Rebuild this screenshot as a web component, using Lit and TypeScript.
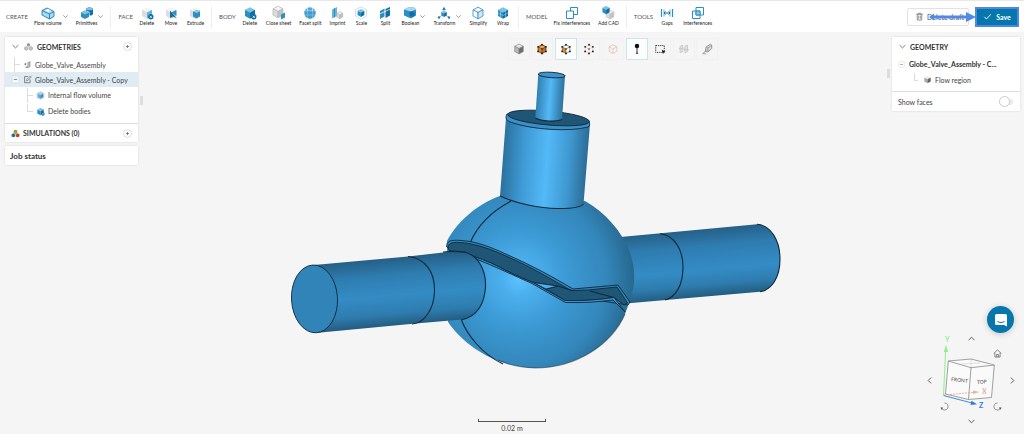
import { LitElement, html, svg, css, nothing, type SVGTemplateResult } from "lit";
import { customElement, state } from "lit/decorators.js";
import { classMap } from "lit/directives/class-map.js";

type Glyph = SVGTemplateResult;

const BLUE = ["#7cc4e6", "#2c8fc4", "#0f6fa5"];
const GREY = ["#f4f4f4", "#dcdcdc", "#c2c2c2"];
const DARK = ["#e8e8e8", "#b9b9b9", "#6e6e6e"];

const cube = (c: string[], stroke = "none", t = ""): Glyph => svg`
  <g transform=${t} stroke=${stroke} stroke-width="0.8" stroke-linejoin="round">
    <path fill=${c[0]} d="M7 1.200 12 3.800 7 6.500 2 3.800Z"/>
    <path fill=${c[1]} d="M2 3.800 7 6.500V12.800L2 10Z"/>
    <path fill=${c[2]} d="M12 3.800 7 6.500V12.800L12 10Z"/>
  </g>`;

const badge = svg`<circle cx="10.800" cy="10.800" r="2.700" fill="#0f6fa5"/><path d="M9.800 9.800l2 2m0-2l-2 2" stroke="#fff" stroke-width="0.800"/>`;
const cubeDots = (stroke: string): Glyph => svg`
  <path d="M7 2 11.500 4.500V9.800L7 12.300 2.500 9.800V4.500ZM2.500 4.500 7 7l4.500-2.500M7 7v5.300" fill="none" stroke=${stroke} stroke-width="0.800"/>`;
const dots = svg`<g fill="#222"><circle cx="7" cy="2" r="1.100"/><circle cx="11.500" cy="4.500" r="1.100"/><circle cx="11.500" cy="9.800" r="1.100"/><circle cx="7" cy="12.300" r="1.100"/><circle cx="2.500" cy="9.800" r="1.100"/><circle cx="2.500" cy="4.500" r="1.100"/><circle cx="7" cy="7" r="0.900"/></g>`;

const glyphs: Record<string, Glyph> = {
  flow: svg`<path d="M1 4.500 6 2l7 3.500v5L8.500 13 1 9Z" fill="#a9d8ef" stroke="#1b80b5" stroke-width="0.900"/><path d="M1 4.500 8.500 8 13 5.500M8.500 8v5" fill="none" stroke="#1b80b5" stroke-width="0.900"/><path d="M4 4.300 7 3l3 1.600-3 1.400Z" fill="#fff"/>`,
  primitives: svg`<path d="M1 6.500 5 4.500l4 2v4.500l-4 2-4-2Z" fill="#2c8fc4"/><path d="M1 6.500 5 8.500l4-2-4-2Z" fill="#7cc4e6"/><path d="M6 3c0-2 7-2 7 0v5c0 1-2 1.800-3.500 1.500V6L6 4.500Z" fill="#0f6fa5"/><ellipse cx="9.500" cy="3" rx="3.500" ry="1.300" fill="#7cc4e6"/>`,
  faceDelete: svg`${cube(GREY)}<path d="M12 4 7 6.500V12.500L12 10Z" fill="#67b4dc"/>${badge}`,
  move: svg`${cube(GREY)}<path d="M6 4.500 13 12.500 9 10.500 6 12Z" fill="#0f6fa5"/><path d="M12.500 4v6L7.500 6.500Z" fill="#2c8fc4"/>`,
  extrude: svg`${cube(GREY)}<path d="M5 5.500 8.500 4 12 5.500v5l-3.500 2L5 10.500Z" fill="#2c8fc4"/><path d="M5 5.500 8.500 7 12 5.500 8.500 4Z" fill="#8dcbe9"/>`,
  bodyDelete: svg`${cube(BLUE)}${badge}`,
  closeSheet: svg`${cube(GREY, "#bbb", "translate(-1 -1)")}<path d="M13 6.500v5L9 13.500v-5Z" fill="#2c8fc4"/>`,
  facetSplit: svg`<circle cx="7" cy="7" r="5.800" fill="#55a9d6"/><path d="M1.500 5h11M1.500 9h11M4.500 1.800v10.400M9.500 1.800v10.400" stroke="#cbe7f5" stroke-width="0.800"/><path d="M1.500 5h11l-1 6L7 13 2.500 11Z" fill="#2c8fc4" opacity="0.500"/>`,
  imprint: svg`<path d="M2 3.500 7 1v9l-5 2.500Z" fill="#67b4dc"/><path d="M4.500 2.300v9" stroke="#1b80b5" stroke-width="0.800"/>${cube(GREY, "#aaa", "translate(5.500 5) scale(0.600)")}`,
  scale: svg`<path d="M7 .8 12.500 3.800v6.400L7 13.200 1.500 10.200V3.800Z" fill="none" stroke="#b8d9e8" stroke-width="0.800"/>${cube(BLUE, "none", "translate(2.200 2.200) scale(0.680)")}`,
  split: svg`<path d="M2 5 6.500 2.500v8L2 13Z" fill="#2c8fc4"/><path d="M7.500 3 12 1v8.500L7.500 12Z" fill="#0f6fa5"/><path d="M1.500 8 12.500 3" stroke="#fff" stroke-width="0.700"/>`,
  boolean: svg`<path d="M1 3.500 5 1.500h6l2 2v6l-5 3-7-3Z" fill="#2c8fc4"/><path d="M1 3.500 5 1.500h6l2 2-5 2Z" fill="#a9d8ef"/><circle cx="9" cy="8" r="2.800" fill="#0f6fa5"/>`,
  transform: svg`<path d="M7 2v6L2 11.500M7 8l5 3.500" stroke="#8ab" stroke-width="0.800" fill="none"/><path d="M7 .8 8.800 4H5.200Z" fill="#1b80b5"/>${cube(BLUE, "none", "translate(3.200 4) scale(0.550)")}<circle cx="2" cy="11.500" r="1.200" fill="#1b80b5"/><circle cx="12" cy="11.500" r="1.200" fill="#1b80b5"/>`,
  simplify: svg`${cube(["#fff", "#fff", "#cfe8f5"], "#2c8fc4")}`,
  wrap: svg`${cube(BLUE)}<path d="M4.500 5.200v6M9.500 5.200v6M2 7l5 2.500L12 7" stroke="#b9dff1" stroke-width="0.500" fill="none"/>`,
  fix: svg`<path d="M5.500 5V1.500h7v7H9" fill="none" stroke="#2c8fc4"/><path d="M1.500 5h7v7.500h-7Z" fill="#fff" stroke="#2c8fc4"/>`,
  addCad: svg`${cube(GREY, "#c4c4c4", "translate(3.500 3) scale(0.780)")}${cube(BLUE, "none", "translate(0 -1) scale(0.720)")}`,
  gaps: svg`<path d="M1.500 3v8M12.500 3v8" stroke="#2c8fc4" stroke-width="1.200"/><path d="M3 3.500h2v7H3ZM9 3.500h2v7H9Z" fill="#a9d8ef"/><path d="M4 7h6M5.500 5.500 4 7l1.500 1.500M8.500 5.500 10 7 8.500 8.500" stroke="#0f6fa5" fill="none"/>`,
  interferences: svg`<path d="M5 1.500h7.500V9H5Z M1.500 5H9v7.500H1.500Z" fill="none" stroke="#2c8fc4"/><path d="M5 5h4v4H5Z" fill="#8dcbe9" stroke="#2c8fc4"/>`,
  shaded: svg`${cube(DARK, "#8a8a8a")}`,
  volume: svg`${cube(["#f3a24d", "#e48420", "#c96d10"])}${cubeDots("#444")}${dots}`,
  face: svg`<path d="M2.500 4.500 7 7v5.300L2.500 9.800Z" fill="#e48420"/>${cubeDots("#666")}${dots}`,
  vertex: svg`${cubeDots("#f0c9b5")}${dots}`,
  edge: svg`${cubeDots("#e8b9a2")}`,
  pin: svg`<circle cx="7" cy="3.500" r="2.600" fill="#111"/><path d="M7 5.500V12" stroke="#111"/><ellipse cx="7" cy="12" rx="1.600" ry="0.800" fill="#555"/>`,
  box: svg`<path d="M2 3h10v8H2Z" fill="none" stroke="#333" stroke-width="1.100" stroke-dasharray="1.500 1"/><path d="M9 8l4.500 2.200-2.200.7-.7 2.100Z" fill="#111"/>`,
  region: svg`<path d="M2.500 4 5.500 2.500v7.500L2.500 11.500ZM8 4 11 2.500V10L8 11.500Z" fill="#e4e4e4" stroke="#bbb" stroke-width="0.800"/><path d="M1 6.500l12 1.500" stroke="#bbb" stroke-width="0.800"/>`,
  measure: svg`<path d="M2 12.500 6.500 8.500M6 4.500l5-3 1.500 1v4l-4.500 4-3-.5Z" fill="#ddd" stroke="#8a8a8a"/><path d="M6 4.500l2 1.500v4M8 6l4.500-3.500M2 12.500l4 .2" fill="none" stroke="#8a8a8a" stroke-width="0.900"/>`,
  tree: svg`<path d="M7 1.500 9.500 3v3L7 7.500 4.500 6V3Z" fill="#999"/><path d="M3.500 7 6 8.500v3L3.500 13 1 11.500v-3ZM10.500 7 13 8.500v3L10.500 13 8 11.500v-3Z" fill="#c9c9c9" stroke="#888" stroke-width="0.800"/>`,
  part: svg`<path d="M7 3.500 11.500 2v8.500L8 12.500H4V10h3Z" fill="#999"/><path d="M2.500 5.500 5 4.500v3l-2.500 1Z" fill="#777"/><path d="M9 3.500v8" stroke="#eee" stroke-width="0.800"/>`,
  edit: svg`<path d="M8 2.500H2.500v9.500H11V7" fill="none" stroke="#666" stroke-width="1.200"/><path d="M5.500 9 6 7l5.500-5.500L13 3 7.500 8.500Z" fill="none" stroke="#666"/>`,
  internal: svg`<path d="M7 .3 13 3.500v7L7 13.700 1 10.500V3.500Z" fill="#c3ced5"/>${cube(["#9fd3ee", "#5aaedb", "#2c8fc4"], "none", "translate(1.400 1.400) scale(0.800)")}`,
  sim: svg`<path d="M7 1 9.800 2.500v3.200L7 7.200 4.200 5.700V2.500Z" fill="#7ba33c"/><path d="M3.700 6.500 6.500 8v3.500L3.700 13 .9 11.500V8Z" fill="#1c6e9e"/><path d="M10.300 6.500 13.100 8v3.500L10.300 13 7.500 11.500V8Z" fill="#b5442c"/><path d="M4.500 5.500h5v3h-5Z" fill="#e0a12b"/>`,
  body: svg`${cube(["#eee", "#aaa", "#666"])}`,
  trash: svg`<path d="M2 3.500h10M5 3.500V2h4v1.500M3.500 3.500V12.500h7V3.500M5.700 5.500v5M8.300 5.500v5" fill="none" stroke="#666" stroke-width="1.100"/>`,
  check: svg`<path d="M2 7.500 5.500 11 12 3.500" fill="none" stroke="#fff" stroke-width="1.400"/>`,
  down: svg`<path d="M2.500 4.800 7 9.200l4.500-4.400" fill="none" stroke="#777" stroke-width="1.500"/>`,
  up: svg`<path d="M2.500 9.500 7 5l4.500 4.500" fill="none" stroke="#555" stroke-width="1.500"/>`,
  left: svg`<path d="M9.500 2.500 5 7l4.500 4.500" fill="none" stroke="#555" stroke-width="1.500"/>`,
  right: svg`<path d="M4.500 2.500 9 7l-4.500 4.500" fill="none" stroke="#555" stroke-width="1.500"/>`,
  plus: svg`<circle cx="7" cy="7" r="6.200" fill="#fff" stroke="#ccc"/><path d="M7 4.500v5M4.500 7h5" stroke="#666" stroke-width="1.200"/>`,
  minus: svg`<rect x="1.500" y="1.500" width="11" height="11" rx="2" fill="#fff" fill-opacity="0.700" stroke="#d5d5d5"/><path d="M4.500 7h5" stroke="#777" stroke-width="1.300"/>`,
  home: svg`<path d="M1 7 7 1.500 13 7M3 6v6.500h8V6M5.700 12.500V8.500h2.600v4" fill="none" stroke="#666" stroke-width="1.200"/>`,
  ccw: svg`<path d="M2.500 10A5.500 5.500 0 1 0 7 1.500" fill="none" stroke="#777" stroke-width="1.200"/><path d="M.5 8.500h4.500L2.500 12Z" fill="#555"/>`,
  cw: svg`<path d="M11.500 10A5.500 5.500 0 1 1 7 1.500" fill="none" stroke="#777" stroke-width="1.200"/><path d="M13.500 8.500H9l2.500 3.500Z" fill="#555"/>`,
};

const icon = (name: string, size = "") =>
  html`<svg class="icon ${size}" viewBox="0 0 14 14" aria-hidden="true">${glyphs[name]}</svg>`;

interface Tool { icon: string; label: string; menu?: boolean }

const groups: { name: string; tools: Tool[] }[] = [
  { name: "CREATE", tools: [{ icon: "flow", label: "Flow volume", menu: true }, { icon: "primitives", label: "Primitives", menu: true }] },
  { name: "FACE", tools: [{ icon: "faceDelete", label: "Delete" }, { icon: "move", label: "Move" }, { icon: "extrude", label: "Extrude" }] },
  {
    name: "BODY",
    tools: [
      { icon: "bodyDelete", label: "Delete" }, { icon: "closeSheet", label: "Close sheet" },
      { icon: "facetSplit", label: "Facet split" }, { icon: "imprint", label: "Imprint" },
      { icon: "scale", label: "Scale" }, { icon: "split", label: "Split" },
      { icon: "boolean", label: "Boolean", menu: true }, { icon: "transform", label: "Transform", menu: true },
      { icon: "simplify", label: "Simplify" }, { icon: "wrap", label: "Wrap" },
    ],
  },
  { name: "MODEL", tools: [{ icon: "fix", label: "Fix interferences" }, { icon: "addCad", label: "Add CAD" }] },
  { name: "TOOLS", tools: [{ icon: "gaps", label: "Gaps" }, { icon: "interferences", label: "Interferences" }] },
];

const viewTools: { icon: string; label: string; on?: boolean }[] = [
  { icon: "shaded", label: "Render mode" }, { icon: "volume", label: "Pick volumes" },
  { icon: "face", label: "Pick faces", on: true }, { icon: "vertex", label: "Pick vertices" },
  { icon: "edge", label: "Pick edges" }, { icon: "pin", label: "Probe", on: true },
  { icon: "box", label: "Box select" }, { icon: "region", label: "Clip" }, { icon: "measure", label: "Measure" },
];

const shared = css`
  * { box-sizing: border-box; }
  button { font: inherit; color: inherit; background: none; border: 0; padding: 0; margin: 0; cursor: pointer; }
  svg { display: block; }
  .icon { width: 12px; height: 12px; flex: none; }
  .icon.tiny { width: 7px; height: 7px; }
  .icon.small { width: 9px; height: 9px; }
  .icon.large { width: 14px; height: 14px; }
`;

@customElement("tool-bar")
export class ToolBar extends LitElement {
  static styles = [shared, css`
    :host { display: flex; align-items: center; justify-content: space-between; height: 32px; background: #fff; border-top: 1px solid #e8e8e8; }
    .groups { display: flex; }
    .group { display: flex; align-items: center; height: 22px; padding: 0 3px 0 7px; border-left: 1px solid #eee; }
    .group:first-child { border-left: 0; padding-left: 6px; }
    .name { font-size: 6px; color: #555; margin-right: 2px; }
    .tool { display: flex; flex-direction: column; align-items: center; min-width: 24px; padding: 0 4px; font-size: 5px; line-height: 7px; white-space: nowrap; color: #222; }
    .menu { margin: 0 3px 0 -4px; }
    .actions { position: relative; display: flex; align-items: center; gap: 6px; margin-right: 5px; }
    .discard { display: flex; align-items: center; gap: 3px; height: 18px; padding: 0 4px 0 7px; font-size: 7px; border: 1px solid #e2e2e2; border-radius: 2px; color: #555; }
    .save { display: flex; align-items: center; justify-content: center; gap: 4px; width: 44px; height: 20px; font-size: 7px; font-weight: 700; color: #fff; background: #0577ac; border: 2px solid #4f87e6; }
    .arrow { position: absolute; right: 43px; top: 5px; width: 47px; height: 10px; }
  `];

  render() {
    return html`
      <div class="groups">
        ${groups.map((g) => html`
          <div class="group" role="group" aria-label=${g.name}>
            <span class="name">${g.name}</span>
            ${g.tools.map((t) => html`
              <button class="tool">${icon(t.icon, "large")}<span>${t.label}</span></button>
              ${t.menu ? html`<button class="menu" aria-label="${t.label} options">${icon("down", "tiny")}</button>` : nothing}
            `)}
          </div>`)}
      </div>
      <div class="actions">
        <button class="discard">${icon("trash", "small")}Delete draft</button>
        <button class="save">${icon("check", "small")}Save</button>
        <svg class="arrow" viewBox="0 0 47 10" aria-hidden="true">
          <path d="M0 5 5 1.500V3.500H37V0L47 5 37 10V6.500H5V8.500Z" fill="#5089e8"/>
        </svg>
      </div>`;
  }
}

@customElement("geometry-tree")
export class GeometryTree extends LitElement {
  static styles = [shared, css`
    :host { display: flex; flex-direction: column; gap: 4px; width: 133px; font-size: 7px; color: #444; }
    .card { background: #fff; box-shadow: 0 0 2px #0002; }
    .head { display: flex; align-items: center; gap: 4px; height: 19px; padding: 0 6px; font-weight: 700; color: #333; }
    .head .title { flex: 1; }
    .row { display: flex; align-items: center; gap: 3px; height: 15px; padding-left: 6px; }
    .row.on { background: #dfecf4; }
    .stub { width: 9px; height: 15px; display: flex; align-items: center; justify-content: flex-end; }
    .stub::before { content: ""; width: 5px; height: 15px; border-left: 1px solid #ddd; background: linear-gradient(#ddd, #ddd) center / 100% 1px no-repeat; }
    .child { padding-left: 19px; height: 16px; }
    .child.last .stub::before { height: 8px; margin-bottom: 7px; background-position: bottom; }
    .tree { padding: 1px 0 4px; }
    .sims { gap: 3px; border-top: 1px solid #ddd; }
    .job { height: 19px; padding: 0 5px; display: flex; align-items: center; font-size: 8px; font-weight: 700; color: #333; }
  `];

  render() {
    return html`
      <section class="card">
        <div class="head">
          <button aria-label="Collapse geometries">${icon("down", "small")}</button>
          ${icon("tree", "small")}<span class="title">GEOMETRIES</span>
          <button aria-label="Add geometry">${icon("plus", "small")}</button>
        </div>
        <div class="tree">
          <div class="row"><span class="stub"></span>${icon("part", "small")}<span>Globe_Valve_Assembly</span></div>
          <div class="row on"><button aria-label="Collapse copy">${icon("minus", "small")}</button>${icon("edit", "small")}<span>Globe_Valve_Assembly - Copy</span></div>
          <div class="row child"><span class="stub"></span>${icon("internal", "small")}<span>Internal flow volume</span></div>
          <div class="row child last"><span class="stub"></span>${icon("bodyDelete", "small")}<span>Delete bodies</span></div>
        </div>
        <div class="head sims">
          ${icon("sim", "small")}<span class="title">SIMULATIONS (0)</span>
          <button aria-label="Add simulation">${icon("plus", "small")}</button>
        </div>
      </section>
      <section class="card job">Job status</section>`;
  }
}

@customElement("geometry-details")
export class GeometryDetails extends LitElement {
  @state() private faces = false;

  static styles = [shared, css`
    :host { display: block; width: 128px; font-size: 7px; color: #444; background: #fff; box-shadow: 0 0 2px #0002; }
    .head, .row { display: flex; align-items: center; padding: 0 6px; }
    .head { gap: 3px; height: 19px; font-weight: 700; color: #333; }
    .row { gap: 4px; height: 16px; }
    .name { font-weight: 700; overflow: hidden; text-overflow: ellipsis; white-space: nowrap; color: #333; }
    .child { padding-left: 22px; margin-bottom: 4px; gap: 3px; height: 15px; }
    .elbow { width: 4px; height: 8px; margin: 0 2px 6px 0; border-left: 1px solid #ddd; border-bottom: 1px solid #ddd; }
    .toggle { display: flex; align-items: center; justify-content: space-between; height: 20px; padding: 0 7px 0 6px; border-top: 1px solid #ddd; }
    .switch { appearance: none; margin: 0; width: 14px; height: 6px; border-radius: 3px; background: #eaeaea; display: flex; align-items: center; }
    .switch::before { content: ""; width: 9px; height: 9px; flex: none; border-radius: 50%; background: #fff; border: 1px solid #ccc; }
    .switch:checked { justify-content: flex-end; background: #0577ac; }
  `];

  render() {
    return html`
      <div class="head"><button aria-label="Collapse geometry">${icon("down", "small")}</button><span>GEOMETRY</span></div>
      <div class="row"><button aria-label="Collapse assembly">${icon("minus", "tiny")}</button><span class="name">Globe_Valve_Assembly - C...</span></div>
      <div class="row child"><span class="elbow"></span>${icon("body", "small")}<span>Flow region</span></div>
      <label class="toggle">Show faces
        <input class="switch" type="checkbox" .checked=${this.faces}
          @change=${(e: Event) => (this.faces = (e.target as HTMLInputElement).checked)} />
      </label>`;
  }
}

@customElement("valve-model")
export class ValveModel extends LitElement {
  static styles = [shared, css`
    :host { display: block; }
    .scene { width: 100%; height: 100%; }
    .line { fill: none; stroke: #10293a; stroke-width: 1.1; stroke-linejoin: round; }
    .edge { stroke: #10293a; stroke-width: 0.9; stroke-linejoin: round; }
    .dark { fill: #1f5676; }
  `];

  render() {
    return html`
      <svg class="scene" viewBox="0 32 1024 402" role="img" aria-label="Globe valve model">
        <defs>
          <radialGradient id="ball" gradientUnits="userSpaceOnUse" cx="519" cy="279" r="118">
            <stop offset="0" stop-color="#5cc2ff"/><stop offset=".14" stop-color="#4cb0ee"/>
            <stop offset=".4" stop-color="#3c9ad5"/><stop offset=".75" stop-color="#3386ba"/><stop offset="1" stop-color="#266489"/>
          </radialGradient>
          <linearGradient id="pipe" gradientUnits="userSpaceOnUse" x1="400" y1="257" x2="406" y2="325">
            <stop offset="0" stop-color="#255f86"/><stop offset=".25" stop-color="#2e7cb0"/><stop offset=".55" stop-color="#348cc5"/>
            <stop offset=".82" stop-color="#2e7cae"/><stop offset="1" stop-color="#235b7e"/>
          </linearGradient>
          <linearGradient id="pipe2" gradientUnits="userSpaceOnUse" x1="700" y1="229" x2="706" y2="297">
            <stop offset="0" stop-color="#255f86"/><stop offset=".25" stop-color="#2e7cb0"/><stop offset=".6" stop-color="#348cc5"/>
            <stop offset=".82" stop-color="#2e7cae"/><stop offset="1" stop-color="#235b7e"/>
          </linearGradient>
          <linearGradient id="neck" gradientUnits="userSpaceOnUse" x1="503" y1="160" x2="587" y2="166">
            <stop offset="0" stop-color="#2c729f"/><stop offset=".25" stop-color="#3f9bd6"/><stop offset=".52" stop-color="#53b9f7"/>
            <stop offset=".78" stop-color="#3f98d0"/><stop offset="1" stop-color="#2b6c95"/>
          </linearGradient>
          <linearGradient id="stem" gradientUnits="userSpaceOnUse" x1="536" y1="96" x2="564" y2="98">
            <stop offset="0" stop-color="#2f7dae"/><stop offset=".5" stop-color="#53b9f7"/><stop offset="1" stop-color="#2c6f99"/>
          </linearGradient>
        </defs>
        <path fill="url(#pipe2)" d="M615 237.500 757 224.300C771 225 780 241 780 259 780 277 772 290 760 291.700L620 304Z"/>
        <path class="line" d="M757 224.300C771 225 780 241 780 259 780 277 772 290 760 291.700M660 233.700C674 235 683 249 683 267 683 285 676 297 665 300"/>
        <path fill="url(#ball)" d="M447 241C457 222 477 204 500 196L585 201C606 213 621 231 629 250 636 268 636 285 629 303L625 314C612 344 577 368 535 368 498 367 466 348 448 322L447 290Z"/>
        <path class="line" d="M625 314C612 344 577 368 535 368 521 367.500 509 365 498 360" stroke-opacity="0.500"/>
        <path class="line" d="M511 201C494 210 478 224 470 243M461 319C467 335 482 354 503 364"/>
        <path fill="url(#neck)" d="M506 118 500 196C515 203 540 209 560 208.500 570 208.500 581 207 583.500 204L590 124Z"/>
        <path class="line" d="M500 196C515 203 540 209 560 208.500 570 208.500 581 207 583.500 204"/>
        <path class="edge" fill="#3a8fc6" d="M507 114C505 118 506 120 510 122 532 130 570 132 588 127 590 126 590 124 589 121Z"/>
        <ellipse class="dark edge" cx="548.500" cy="118" rx="41" ry="7" transform="rotate(5 548.500 118)"/>
        <path fill="url(#stem)" d="M538.300 74 535.300 118C541 121.500 556 122 562 119.500L565 76Z"/>
        <path class="line" d="M535.300 118C541 121.500 556 122 562 119.500"/>
        <ellipse fill="#3d94cb" class="edge" cx="551.700" cy="75" rx="13.500" ry="2.700" transform="rotate(4 551.700 75)"/>
        <path class="edge" fill="#2f83b8" d="M446.800 247C446 240 452 239 470 241.500 484 244 497 250 508 255 533 266 553 277 573 289L618 285 630 302 628 305 570 296Z"/>
        <path class="dark edge" d="M448 247C448 242 456 241.500 469 243.500 483 246 496 251.500 507 256.500 531 267 551 279 571 290.500L588 290 617 287 627.500 303 624 305 614 297.500C598 300 582 301 565 300.500L546 289 558 286 533 282.500C524 279 515 275 507 271 496 265 485 260 475 257L465 252 449 250.500Z"/>
        <path fill="#4eb0ec" class="edge" d="M533 282.500 558 286 546 289Z"/>
        <path class="line" d="M558 286 572 290.500M590 291 614 297.500"/>
        <path class="edge" fill="#3a96d0" d="M475 257C485 260 496 265 507 271 515 275 524 279 533 282.500L565 300.500C582 301 598 300 614 297.500L625 312 613 300C598 302 583 303 565.500 302.500L532 283.500C515 276 494 266 475 258.500Z"/>
        <path fill="url(#pipe)" d="M314 265 408 256.500 443 252.500C449 251 458 251.500 466 252.500 478 256 486 270 485.500 286 485 303 477 317 462 319.500L413 323.700 318 332.700Z"/>
        <path class="line" d="M443 252C449 251 458 251.500 466 252.500 478 256 486 270 485.500 286 485 303 477 317 462 319.500M408 256.500C425 258 435 272 434.500 291 434 310 424 323 412 324"/>
        <ellipse class="edge" fill="#3084b8" cx="314.500" cy="298.900" rx="23" ry="33.900" transform="rotate(-3 314.500 298.900)"/>
      </svg>`;
  }
}

@customElement("view-cube")
export class ViewCube extends LitElement {
  static styles = [shared, css`
    :host { display: grid; grid-template: 24px 1fr 24px / 24px 1fr 24px; width: 92px; height: 92px; }
    .cube { grid-area: 1 / 1 / 4 / 4; width: 92px; height: 92px; }
    .up { grid-area: 1 / 2; place-self: start center; }
    .home { grid-area: 1 / 3; place-self: end start; }
    .left { grid-area: 2 / 1; place-self: center start; }
    .right { grid-area: 2 / 3; place-self: center end; }
    .ccw { grid-area: 3 / 1; place-self: start end; }
    .down { grid-area: 3 / 2; place-self: end center; }
    .cw { grid-area: 3 / 3; place-self: start start; }
    .down .icon { transform: rotate(180deg); }
    .wire { fill: #fafafa; stroke: #888; stroke-width: 0.8; stroke-linejoin: round; }
    .caption { font-size: 5px; fill: #444; }
    .axis { font-size: 7px; font-weight: 700; }
  `];

  render() {
    return html`
      <svg class="cube" viewBox="925 334 92 92" aria-label="View cube">
        <path d="M943.500 395 945.700 350" stroke="#8df08d"/><path d="M943.800 352 946 345 948 352Z" fill="#8df08d"/>
        <path class="wire" d="M948.300 361 971 359 994.300 365 991.500 397.500 968.500 399.500 945.500 394Z"/>
        <path class="wire" d="M948.300 361 971 367.700 994.300 365M971 367.700 968.500 399.500"/>
        <path d="M962 364l18-1M971 360v7" stroke="#ccc" stroke-width="0.600"/>
        <path d="M944 395 974 392.300" stroke="#e0a08c" stroke-width="0.800" stroke-dasharray="2 1"/><path d="M973 390.500 979.500 392 973 394Z" fill="#e5b3a3"/>
        <path d="M943.500 395.500 972 403" stroke="#4a90e2" stroke-width="1.100"/><path d="M971.500 400.800 977 404.300 970.500 405Z" fill="#2d7be0"/>
        <text class="axis" x="945" y="342" fill="#8df08d">Y</text>
        <text class="axis" x="982" y="394" fill="#e0b09f">X</text>
        <text class="axis" x="979" y="408" fill="#2d7be0">Z</text>
        <text class="caption" transform="translate(951 381) rotate(6)">FRONT</text>
        <text class="caption" transform="translate(977 384) rotate(-4)">TOP</text>
      </svg>
      ${["up", "home", "left", "right", "ccw", "down", "cw"].map((n) => html`
        <button class=${n} aria-label="View ${n}">${icon(n === "down" ? "up" : n, "small")}</button>`)}`;
  }
}

@customElement("app-root")
export class AppRoot extends LitElement {
  static styles = [shared, css`
    :host { display: flex; flex-direction: column; min-height: 100vh; background: #f5f5f5; font-family: Lato, sans-serif; font-size: 7px; color: #444; }
    .stage { position: relative; flex: 1; display: flex; flex-direction: column; justify-content: space-between; }
    .model { position: absolute; inset: 0; }
    .top { position: relative; display: flex; align-items: flex-start; gap: 2px; padding: 5px 4px 0 5px; }
    .grip { width: 3px; height: 9px; background: #ddd; margin-top: 59px; }
    .grip.right { margin-top: 32px; }
    .center { flex: 1; display: flex; justify-content: center; padding-left: 196px; }
    .view { display: grid; grid-template-columns: repeat(9, 1fr); width: 212px; margin-top: 1px; }
    .pick { display: grid; place-items: center; width: 22px; height: 22px; justify-self: center; border: 1px solid #f1f1f1; }
    .pick.on { background: #fcfdfd; border-color: #cfe3ec; }
    .scale { position: relative; align-self: center; width: 68px; text-align: center; font-size: 7px; line-height: 9px; padding-bottom: 1px; }
    .bar { height: 3px; margin-bottom: 2px; border: solid #555; border-width: 0 1px 1px; }
    .cube { position: absolute; right: 7px; bottom: 8px; }
    .chat { position: absolute; right: 10px; bottom: 101px; display: grid; place-items: center; width: 27px; height: 27px; border-radius: 50%; background: #0577ac; box-shadow: 0 1px 6px #0003; }
  `];

  render() {
    return html`
      <tool-bar></tool-bar>
      <main class="stage">
        <valve-model class="model"></valve-model>
        <div class="top">
          <geometry-tree></geometry-tree>
          <span class="grip"></span>
          <div class="center">
            <div class="view" role="toolbar" aria-label="View tools">
              ${viewTools.map((v) => html`
                <button class=${classMap({ pick: true, on: !!v.on })} aria-label=${v.label}>${icon(v.icon)}</button>`)}
            </div>
          </div>
          <span class="grip right"></span>
          <geometry-details></geometry-details>
        </div>
        <div class="scale"><div class="bar"></div>0.02 m</div>
        <button class="chat" aria-label="Open chat">
          <svg class="icon large" viewBox="0 0 14 14"><path d="M2.500 1h9a1.500 1.500 0 0 1 1.500 1.500V13.500L10 12H2.500A1.500 1.500 0 0 1 1 10.500v-8A1.500 1.500 0 0 1 2.500 1Z" fill="#fff"/><path d="M3.500 8.500q3.500 2.500 7 0" fill="none" stroke="#0577ac"/></svg>
        </button>
        <view-cube class="cube"></view-cube>
      </main>`;
  }
}
